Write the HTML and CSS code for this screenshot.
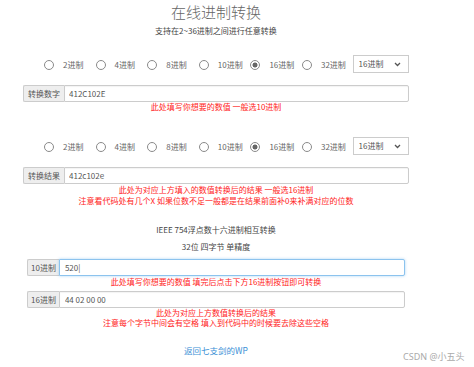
FILE: index.html
```html
<!DOCTYPE html>
<html lang="zh-CN">
<head>
    <meta charset="UTF-8">
    <title>在线进制转换</title>
    <link rel="stylesheet" href="styles.css">
</head>
<body>
    <div class="page">
        <h1 class="title">在线进制转换</h1>
        <p class="sub">支持在2~36进制之间进行任意转换</p>

        <div class="radios">
            <label class="cell"><input type="radio" name="from"> <span>2进制</span></label>
            <label class="cell"><input type="radio" name="from"> <span>4进制</span></label>
            <label class="cell"><input type="radio" name="from"> <span>8进制</span></label>
            <label class="cell"><input type="radio" name="from"> <span>10进制</span></label>
            <label class="cell"><input type="radio" name="from" checked> <span>16进制</span></label>
            <label class="cell"><input type="radio" name="from"> <span>32进制</span></label>
            <div class="sel">
                <select><option>16进制</option></select>
                <svg class="chev" width="7" height="5" viewBox="0 0 7 5"><path d="M1 1 L3.5 3.5 L6 1" fill="none" stroke="#555" stroke-width="1.3"/></svg>
            </div>
        </div>
        <div class="group g1">
            <span class="addon">转换数字</span>
            <input class="field" type="text" value="412C102E">
        </div>
        <p class="hint">此处填写你想要的数值 一般选10进制</p>

        <div class="radios r2">
            <label class="cell"><input type="radio" name="to"> <span>2进制</span></label>
            <label class="cell"><input type="radio" name="to"> <span>4进制</span></label>
            <label class="cell"><input type="radio" name="to"> <span>8进制</span></label>
            <label class="cell"><input type="radio" name="to"> <span>10进制</span></label>
            <label class="cell"><input type="radio" name="to" checked> <span>16进制</span></label>
            <label class="cell"><input type="radio" name="to"> <span>32进制</span></label>
            <div class="sel">
                <select><option>16进制</option></select>
                <svg class="chev" width="7" height="5" viewBox="0 0 7 5"><path d="M1 1 L3.5 3.5 L6 1" fill="none" stroke="#555" stroke-width="1.3"/></svg>
            </div>
        </div>
        <div class="group g1 g2">
            <span class="addon">转换结果</span>
            <input class="field" type="text" value="412c102e">
        </div>
        <p class="hint two">此处为对应上方填入的数值转换后的结果 一般选16进制<br>注意看代码处有几个X 如果位数不足一般都是在结果前面补0来补满对应的位数</p>

        <p class="ieee">IEEE 754浮点数十六进制相互转换</p>
        <p class="ieee prec">32位 四字节 单精度</p>
        <div class="group g3">
            <span class="addon">10进制</span>
            <input class="field focus" type="text" value="520|">
        </div>
        <p class="hint h3">此处填写你想要的数值 填完后点击下方16进制按钮即可转换</p>
        <div class="group g3 g4">
            <span class="addon">16进制</span>
            <input class="field" type="text" value="44 02 00 00">
        </div>
        <p class="hint two h4">此处为对应上方数值转换后的结果<br>注意每个字节中间会有空格 填入到代码中的时候要去除这些空格</p>

        <p class="back"><a href="#">返回七支剑的WP</a></p>
    </div>
    <div class="mark">CSDN @小五头</div>
</body>
</html>
```

FILE: styles.css
```css
body {
    margin: 0;
    font-family: "Noto Sans CJK SC", "Noto Sans", sans-serif;
    color: #555;
    background: #fff;
    width: 474px;
    height: 367px;
    overflow: hidden;
    position: relative;
}

.page {
    width: 432px;
}

p {
    margin: 0;
}

.title {
    margin: 0;
    height: 24px;
    line-height: 24px;
    font-size: 15px;
    font-weight: 300;
    text-align: center;
    color: #666;
}

.sub {
    line-height: 14px;
    font-size: 8px;
    text-align: center;
    color: #444;
}

.radios {
    display: flex;
    align-items: center;
    height: 18px;
    margin-top: 17px;
    padding-left: 44px;
}

.radios.r2 {
    margin-top: 25px;
}

.cell {
    width: 51.6px;
    display: flex;
    align-items: center;
    font-size: 8px;
    color: #666;
    white-space: nowrap;
}

.cell input {
    appearance: none;
    -webkit-appearance: none;
    margin: 2px 9px 0 0;
    width: 10px;
    height: 10px;
    border: 1px solid #8a8a8a;
    border-radius: 50%;
    background: #fff;
    box-sizing: border-box;
}

.cell input:checked {
    background: radial-gradient(circle, #666 0 2.2px, #fff 2.8px);
}

.sel {
    position: relative;
    margin-left: -1px;
}

.sel select {
    appearance: none;
    -webkit-appearance: none;
    width: 56px;
    height: 18px;
    border: 1px solid #ccc;
    border-radius: 0;
    background: #fff;
    font-family: inherit;
    font-size: 8px;
    color: #555;
    padding: 0 0 0 5px;
    line-height: 16px;
    display: block;
}

.sel .chev {
    position: absolute;
    right: 8px;
    top: 7px;
}

.group {
    display: flex;
    margin: 12px 0 0 23px;
    width: 386px;
    height: 17px;
}

.addon {
    display: flex;
    align-items: center;
    padding: 0 4px;
    background: #eee;
    border: 1px solid #ccc;
    border-right: none;
    border-radius: 2px 0 0 2px;
    font-size: 8px;
    color: #555;
    white-space: nowrap;
}

.field {
    flex: 1;
    min-width: 0;
    border: 1px solid #ccc;
    border-radius: 0 2px 2px 0;
    padding: 0 4px;
    font-family: inherit;
    font-size: 8px;
    color: #555;
    outline: none;
    box-shadow: inset 0 1px 1px rgba(0, 0, 0, 0.05);
}

.field.focus {
    border-color: #8cc3ee;
    box-shadow: 0 0 3px rgba(102, 175, 233, 0.55);
}

.hint {
    margin-left: 23px;
    width: 386px;
    text-align: center;
    color: #f22;
    font-size: 8px;
    line-height: 10px;
}

.hint.two {
    line-height: 11px;
}

.ieee {
    margin-top: 17px;
    text-align: center;
    font-size: 8px;
    line-height: 14px;
    color: #444;
}

.ieee.prec {
    margin-top: 3px;
}

.group.g3 {
    margin: 5px 0 0 27px;
    width: 378px;
}

.g3 .addon {
    padding: 0 3px;
}

.g3 .field {
    padding-left: 5px;
}

.hint.h3 {
    line-height: 12px;
}

.group.g4 {
    margin-top: 3px;
}

.hint.h4 {
    line-height: 10px;
}

.back {
    margin-top: 16px;
    text-align: center;
    font-size: 8.5px;
    line-height: 12px;
}

.back a {
    color: #3a8fd6;
    text-decoration: none;
}

.mark {
    position: absolute;
    left: 403px;
    top: 350px;
    font-size: 9px;
    line-height: 14px;
    color: #aaa;
    font-family: "Noto Sans", "Noto Sans CJK SC", sans-serif;
}
```
